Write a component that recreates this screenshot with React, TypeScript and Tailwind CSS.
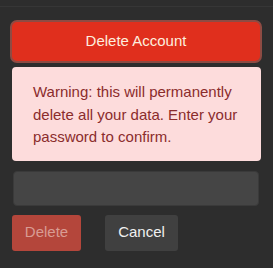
export default function App() {
  return (
    <div className="h-[268px] w-[273px] bg-[#2d2d2d] font-['Liberation_Sans',Arial,sans-serif]">
      <div className="h-[6px]" />
      <div className="border-t border-[#363636] px-[10px] pt-[13px]">
        <button className="flex h-[43px] w-[252px] items-center justify-center rounded-[7px] border-2 border-[#8e4b43] bg-[#e02f1d] text-[15px] text-[#fdeede]">
          Delete Account
        </button>
        <div className="mx-[2px] mt-[4px] rounded-[4px] bg-[#fddcdc] pb-[12px] pl-[21px] pr-[10px] pt-[14px] text-[15px] leading-[22.5px] text-[#8b2c2c]">
          Warning: this will permanently delete all your data. Enter your password to confirm.
        </div>
        <input
          type="password"
          className="mx-[3px] mt-[10px] block h-[35px] w-[246px] rounded-[4px] border border-[#3a3a3a] bg-[#454545] outline-none"
        />
        <div className="mt-[9px] flex gap-[24px] pl-[2px]">
          <button className="h-[36px] w-[69px] rounded-[3px] bg-[#b4463b] text-[15px] text-[#d99c93]">
            Delete
          </button>
          <button className="h-[36px] w-[73px] rounded-[3px] bg-[#404040] text-[15px] text-[#f0f0f0]">
            Cancel
          </button>
        </div>
      </div>
    </div>
  );
}
